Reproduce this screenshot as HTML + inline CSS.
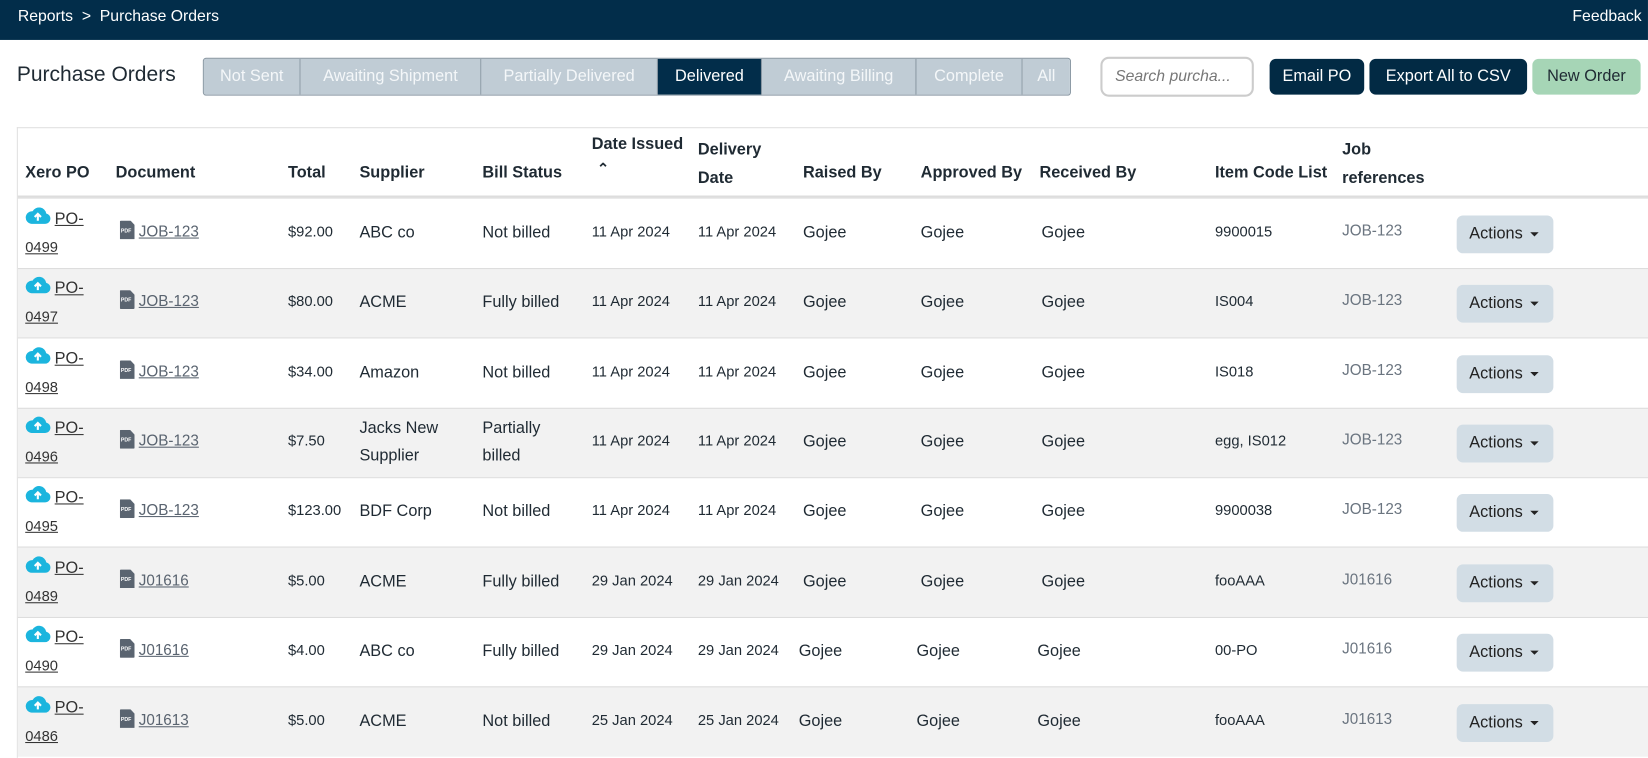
<!DOCTYPE html>
<html><head><meta charset="utf-8"><style>
*{box-sizing:border-box;margin:0;padding:0}
body{width:1648px;height:746px;overflow:hidden;background:#fff;font-family:"Liberation Sans",sans-serif;color:#1f2a33;position:relative}
#wrap{position:absolute;left:0;top:0;width:1568px;height:710px;transform:scale(1.051);transform-origin:0 0}
.top{position:absolute;left:0;top:0;width:1568px;height:38px;background:#022d4a;color:#fff;font-size:15px}
.top span{position:absolute;top:7px}
.h1{position:absolute;left:16px;top:60px;font-size:20px;color:#1f2a33}
.tabs{position:absolute;left:193px;top:55px;height:36px;display:flex;border:1px solid #8a98a3;border-radius:3px;overflow:hidden}
.tabs div{background:#c0ccd5;color:#f4f7f9;font-size:15.5px;line-height:34px;text-align:center;border-right:1px solid #8a98a3}
.tabs div:last-child{border-right:none}
.tabs .on{background:#022d4a;color:#fff}
.search{position:absolute;left:1047px;top:54px;width:146px;height:38px;border:2px solid #ccc;border-radius:8px;font-style:italic;color:#777;font-size:15px;padding:8px 12px}
.btn{position:absolute;top:56px;height:34px;border-radius:6px;font-size:15.5px;line-height:33px;text-align:center;color:#fff;background:#022a44}
.tbl{position:absolute;left:16px;top:121px;width:1560px;height:600px;border-left:1px solid #e0e0e0;border-top:1px solid #e0e0e0}
.c{position:absolute;font-size:15.5px}
.hd{font-weight:bold;font-size:15.5px}
.row{position:absolute;left:17px;width:1560px;border-top:1px solid #ddd}
.g{background:#f2f2f2}
.sm{font-size:14px}
a{color:#333;text-decoration:underline}
.jr{color:#6b7580;font-size:14.5px}
.act{position:absolute;left:1386px;width:92px;height:36px;background:#d2dde5;border-radius:6px;font-size:15.5px;line-height:36px;padding-left:12px;color:#222}
.act:after{content:"";position:absolute;right:14px;top:16px;border:4px solid transparent;border-top-color:#222;border-bottom:0}
.pdf{display:inline-block;width:14px;height:18px;background:#5a6470;border-radius:1px;vertical-align:-3px;margin-right:4px;position:relative;clip-path:polygon(0 0,70% 0,100% 25%,100% 100%,0 100%)}
.pdf:after{content:"PDF";position:absolute;left:1px;top:7px;font-size:5px;color:#fff;font-weight:bold}
</style></head><body><div id="wrap">
<div class="top"><span style="left:17px">Reports &nbsp;&gt;&nbsp; Purchase Orders</span><span style="right:6px">Feedback</span></div>
<div class="h1">Purchase Orders</div>
<div class="tabs">
<div style="width:92px">Not Sent</div><div style="width:172px">Awaiting Shipment</div><div style="width:168px">Partially Delivered</div><div class="on" style="width:99px">Delivered</div><div style="width:147px">Awaiting Billing</div><div style="width:101px">Complete</div><div style="width:45px">All</div></div>
<div class="search">Search purcha...</div>
<div class="btn" style="left:1208px;width:90px">Email PO</div>
<div class="btn" style="left:1303px;width:150px">Export All to CSV</div>
<div class="btn" style="left:1458px;width:103px;background:#a6d5b6;color:#1f2a33">New Order</div>
<div class="tbl"></div>
<div class="c hd" style="left:24px;top:156px">Xero PO</div>
<div class="c hd" style="left:110px;top:156px">Document</div>
<div class="c hd" style="left:274px;top:156px">Total</div>
<div class="c hd" style="left:342px;top:156px">Supplier</div>
<div class="c hd" style="left:459px;top:156px">Bill Status</div>
<div class="c hd" style="left:563px;top:129px">Date Issued</div>
<div class="c hd" style="left:568px;top:152px;font-size:14px">&#8963;</div>
<div class="c hd" style="left:664px;top:129px;line-height:27px">Delivery<br>Date</div>
<div class="c hd" style="left:764px;top:156px">Raised By</div>
<div class="c hd" style="left:876px;top:156px">Approved By</div>
<div class="c hd" style="left:989px;top:156px">Received By</div>
<div class="c hd" style="left:1156px;top:156px">Item Code List</div>
<div class="c hd" style="left:1277px;top:129px;line-height:27px">Job<br>references</div>
<div class="row" style="top:186px;border-top:2px solid #ddd;height:1px"></div>
<div id="rows"></div>
</div>
<script>
var d=[["0499","JOB-123","$92.00","ABC co","Not billed","11 Apr 2024","11 Apr 2024","9900015","JOB-123"],
["0497","JOB-123","$80.00","ACME","Fully billed","11 Apr 2024","11 Apr 2024","IS004","JOB-123"],
["0498","JOB-123","$34.00","Amazon","Not billed","11 Apr 2024","11 Apr 2024","IS018","JOB-123"],
["0496","JOB-123","$7.50","Jacks New<br>Supplier","Partially<br>billed","11 Apr 2024","11 Apr 2024","egg, IS012","JOB-123"],
["0495","JOB-123","$123.00","BDF Corp","Not billed","11 Apr 2024","11 Apr 2024","9900038","JOB-123"],
["0489","J01616","$5.00","ACME","Fully billed","29 Jan 2024","29 Jan 2024","fooAAA","J01616"],
["0490","J01616","$4.00","ABC co","Fully billed","29 Jan 2024","29 Jan 2024","00-PO","J01616"],
["0486","J01613","$5.00","ACME","Not billed","25 Jan 2024","25 Jan 2024","fooAAA","J01613"]];
var tops=[188,255,321,388,454,520,587,653],h="";
var cloud='<svg width="24" height="18" viewBox="0 0 24 18" style="vertical-align:-1px;margin-right:4px"><path d="M6 17h13a5 5 0 0 0 1-9.9A7 7 0 0 0 7 5 6 6 0 0 0 6 17z" fill="#1bb5de"/><path d="M12 14V8M9 10.5l3-3 3 3" stroke="#fff" stroke-width="2" fill="none"/></svg>';
d.forEach(function(r,i){var t=tops[i],hh=(tops[i+1]||720)-t,m=t+hh/2;
h+='<div class="row'+(i%2?' g':'')+'" style="top:'+t+'px;height:'+hh+'px"></div>';
h+='<div class="c" style="left:24px;top:'+(m-26)+'px;line-height:26px">'+cloud+'<a>PO-</a><br><a class="sm">'+r[0]+'</a></div>';
h+='<div class="c" style="left:114px;top:'+(m-12)+'px"><span class="pdf"></span><a class="jr" style="color:#5a6470">'+r[1]+'</a></div>';
h+='<div class="c sm" style="left:274px;top:'+(m-10)+'px">'+r[2]+'</div>';
h+='<div class="c" style="left:342px;top:'+(r[3].indexOf('<br>')>=0?m-26:m-13)+'px;line-height:26px">'+r[3]+'</div>';
h+='<div class="c" style="left:459px;top:'+(r[4].indexOf('<br>')>=0?m-26:m-13)+'px;line-height:26px">'+r[4]+'</div>';
h+='<div class="c sm" style="left:563px;top:'+(m-10)+'px">'+r[5]+'</div>';
h+='<div class="c sm" style="left:664px;top:'+(m-10)+'px">'+r[6]+'</div>';
var o=i>=6?-4:0;
h+='<div class="c" style="left:'+(764+o)+'px;top:'+(m-9)+'px">Gojee</div>';
h+='<div class="c" style="left:'+(876+o)+'px;top:'+(m-9)+'px">Gojee</div>';
h+='<div class="c" style="left:'+(991+o)+'px;top:'+(m-9)+'px">Gojee</div>';
h+='<div class="c sm" style="left:1156px;top:'+(m-10)+'px">'+r[7]+'</div>';
h+='<div class="c jr" style="left:1277px;top:'+(m-10)+'px">'+r[8]+'</div>';
h+='<div class="act" style="top:'+(m-17)+'px">Actions</div>';
});
document.getElementById('rows').innerHTML=h;
</script>
</body></html>
